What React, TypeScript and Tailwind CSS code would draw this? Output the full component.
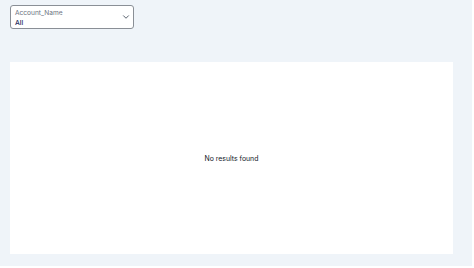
import React from "react";

export default function App() {
  return (
    <div className="w-[474px] h-[268px] bg-white" style={{ fontFamily: "Inter, 'Noto Sans', sans-serif" }}>
      <div className="w-[472px] h-[266px] bg-[#eff4f9] flex flex-col pl-[10px] pr-[19px] pt-[5px]">
        <div className="w-[124px] h-[24px] bg-white border border-[#8a8f96] rounded-[3px] flex items-center justify-between pl-[4px] pr-[2px]">
          <div className="flex flex-col leading-none pt-[1px]">
            <span className="text-[6.6px] text-[#6b7280] leading-[9px]">Account_Name</span>
            <span className="text-[6.8px] font-medium text-[#1e2a5e] leading-[9px]">All</span>
          </div>
          <svg width="10" height="10" viewBox="0 0 24 24" fill="none" stroke="#4b5563" strokeWidth="2.2" strokeLinecap="round" strokeLinejoin="round">
            <path d="M6 9l6 6 6-6" />
          </svg>
        </div>
        <div className="mt-[33px] h-[192px] bg-white flex items-center justify-center pt-[2px]">
          <span className="text-[6.9px] text-[#111827]">No results found</span>
        </div>
      </div>
    </div>
  );
}
